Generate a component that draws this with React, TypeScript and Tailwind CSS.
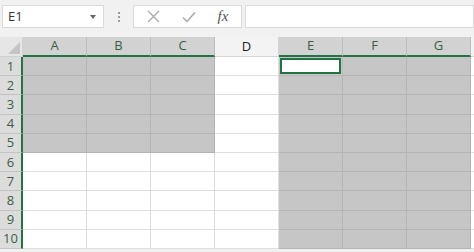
import React from 'react';

const columns = ['A', 'B', 'C', 'D', 'E', 'F', 'G'];
const rows = [1, 2, 3, 4, 5, 6, 7, 8, 9, 10];

// selection: A1:C5 and E1:G10, active cell E1
const isShaded = (col: number, row: number) =>
    (col <= 2 && row <= 5) || (col >= 4 && row >= 1);

const Cell: React.FC<{ col: number; row: number }> = ({ col, row }) => {
    if (col === 4 && row === 1) {
        return (
            <div className="h-full w-[64px] shrink-0 border-r border-b border-[#b9b9b9] bg-[#c6c6c6] p-px">
                <div className="h-full w-full border-2 border-[#217346] bg-white" />
            </div>
        );
    }
    if (isShaded(col, row)) {
        return <div className="h-full w-[64px] shrink-0 border-r border-b border-[#b3b3b3] bg-[#c6c6c6]" />;
    }
    return <div className="h-full w-[64px] shrink-0 border-r border-b border-[#dedede] bg-white" />;
};

const App: React.FC = () => {
    return (
        <div
            className="h-[252px] w-[474px] overflow-hidden bg-[#f1f1f1] text-[#444]"
            style={{ fontFamily: '"Open Sans", "Noto Sans", sans-serif' }}
        >
            {/* formula bar */}
            <div className="flex h-[37px] items-start gap-0 pt-[5px] pl-[2px]">
                <div className="flex h-[23px] w-[102px] items-center justify-between border border-[#dadada] bg-white pr-[7px] pl-[5px]">
                    <span className="text-[13px] leading-none text-[#333]">E1</span>
                    <span className="mt-px border-x-[3px] border-t-[4px] border-x-transparent border-t-[#666]" />
                </div>
                <div className="flex h-[23px] w-[29px] flex-col items-center justify-center gap-[2px]">
                    <span className="h-[2px] w-[2px] bg-[#999]" />
                    <span className="h-[2px] w-[2px] bg-[#999]" />
                    <span className="h-[2px] w-[2px] bg-[#999]" />
                </div>
                <div className="flex h-[23px] w-[109px] items-center border border-[#dadada] bg-white">
                    <div className="flex w-[38px] justify-center">
                        <svg width="13" height="13" viewBox="0 0 13 13">
                            <path d="M1 1 L12 12 M12 1 L1 12" stroke="#a6a6a6" strokeWidth="1.2" fill="none" />
                        </svg>
                    </div>
                    <div className="flex w-[34px] justify-center">
                        <svg width="14" height="12" viewBox="0 0 14 12">
                            <path d="M1 6.5 L5 10.5 L13 1.5" stroke="#a6a6a6" strokeWidth="1.4" fill="none" />
                        </svg>
                    </div>
                    <div className="flex w-[34px] justify-center">
                        <span
                            className="text-[15px] leading-none text-[#555] italic"
                            style={{ fontFamily: '"Liberation Serif", serif' }}
                        >
                            fx
                        </span>
                    </div>
                </div>
                <div className="ml-[3px] h-[23px] flex-1 border border-[#dadada] bg-white" />
            </div>

            {/* sheet */}
            <div className="flex flex-col">
                <div className="flex h-[20px]">
                    <div className="relative h-full w-[23px] shrink-0 border-r border-b border-[#d0d0d0] bg-[#e6e6e6]">
                        <div className="absolute right-[2px] bottom-[2px] h-0 w-0 border-t-[12px] border-r-[12px] border-t-transparent border-r-[#c4c4c4]" />
                    </div>
                    {columns.map((c, i) =>
                        i === 3 ? (
                            <div
                                key={c}
                                className="flex h-full w-[64px] shrink-0 items-center justify-center border-r border-b border-[#d4d4d4] bg-[#f3f3f3] text-[13px] text-[#222]"
                            >
                                {c}
                            </div>
                        ) : (
                            <div
                                key={c}
                                className="flex h-full w-[64px] shrink-0 items-center justify-center border-r border-b-2 border-r-[#bdbdbd] border-b-[#217346] bg-[#d2d2d2] text-[13px] text-[#3b5e48]"
                            >
                                {c}
                            </div>
                        ),
                    )}
                    <div className="h-full flex-1 border-b border-[#d4d4d4] bg-[#f3f3f3]" />
                </div>
                {rows.map((r) => (
                    <div key={r} className="flex h-[19.2px]">
                        <div className="flex h-full w-[23px] shrink-0 items-center justify-center border-r-2 border-b border-r-[#217346] border-b-[#c4c4c4] bg-[#dcdcdc] text-[13px] leading-none text-[#3b5e48]">
                            {r}
                        </div>
                        {columns.map((c, i) => (
                            <Cell key={c} col={i} row={r} />
                        ))}
                        <div className="h-full flex-1 border-b border-[#dedede] bg-white" />
                    </div>
                ))}
            </div>
        </div>
    );
};

export default App;
